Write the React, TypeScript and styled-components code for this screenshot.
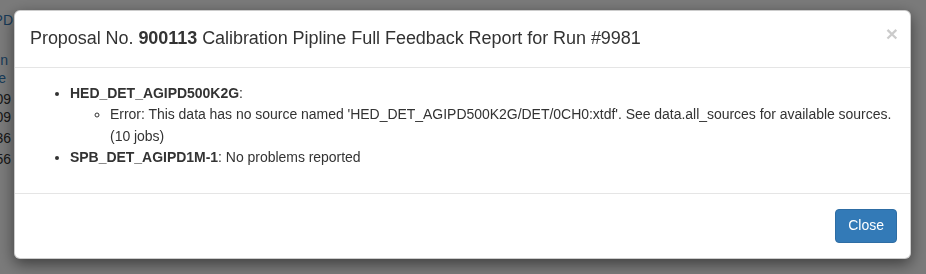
import styled, { createGlobalStyle } from 'styled-components'

const GlobalStyle = createGlobalStyle`
  html, body {
    margin: 0;
    padding: 0;
    background: #fff;
    font-family: "Liberation Sans", Arial, Helvetica, sans-serif;
    color: #333;
    font-size: 14px;
    line-height: 1.42857;
  }
  * { box-sizing: border-box; }
`

const Page = styled.div`
  width: 926px;
  height: 274px;
  overflow: hidden;
`

const PageColumn = styled.div`
  width: 14px;
  overflow: hidden;
  direction: rtl;
  text-align: right;
  white-space: nowrap;
  padding-top: 10px;
`

const PageCell = styled.div<{ $link?: boolean; $gap: number; $trim: number }>`
  margin-top: ${(p) => p.$gap}px;
  padding-right: ${(p) => p.$trim}px;
  height: 20px;
  line-height: 20px;
  color: ${(p) => (p.$link ? '#337ab7' : '#333')};
`

const Backdrop = styled.div`
  position: fixed;
  inset: 0;
  background: rgba(0, 0, 0, 0.52);
`

const Dialog = styled.div`
  position: fixed;
  top: 10px;
  left: 14px;
  width: 897px;
  background: #fff;
  border: 1px solid rgba(0, 0, 0, 0.2);
  border-radius: 6px;
  box-shadow: 0 5px 15px rgba(0, 0, 0, 0.5);
`

const Header = styled.div`
  display: flex;
  align-items: flex-start;
  justify-content: space-between;
  padding: 15px;
  border-bottom: 1px solid #e5e5e5;
`

const Title = styled.h4`
  margin: 0;
  font-size: 18px;
  font-weight: 500;
  line-height: 1.42857;
  letter-spacing: -0.05px;
`

const CloseX = styled.button`
  border: 0;
  background: transparent;
  padding: 0;
  margin-top: -3px;
  margin-right: -3px;
  font-family: "Liberation Sans", Arial, sans-serif;
  font-size: 21px;
  font-weight: 700;
  line-height: 1;
  color: #000;
  opacity: 0.2;
  text-shadow: 0 1px 0 #fff;
`

const Body = styled.div`
  padding: 15px;
  font-size: 14px;
  line-height: 21.4px;
  letter-spacing: -0.03px;
`

const List = styled.ul<{ $nested?: boolean }>`
  margin: 0 0 ${(p) => (p.$nested ? 0 : 10)}px;
  padding-left: 40px;
  list-style-type: ${(p) => (p.$nested ? 'circle' : 'disc')};
`

const Footer = styled.div`
  display: flex;
  justify-content: flex-end;
  padding: 15px;
  border-top: 1px solid #e5e5e5;
`

const Button = styled.button`
  font-family: "Liberation Sans", Arial, sans-serif;
  font-size: 14px;
  line-height: 1.42857;
  padding: 6px 12px;
  color: #fff;
  background: #337ab7;
  border: 1px solid #2e6da4;
  border-radius: 4px;
  margin-right: -2px;
`

const pageCells = [
  { text: 'AGIPD', link: true, gap: 0, trim: 1 },
  { text: 'Run', link: true, gap: 20, trim: 6 },
  { text: 'Feedbackle', link: true, gap: -2, trim: 8 },
  { text: '2023-09', gap: 1, trim: 3 },
  { text: '2023-09', gap: -2, trim: 3 },
  { text: '12:36', gap: 1, trim: 3 },
  { text: '12:56', gap: 1, trim: 3 },
]

export default function App() {
  return (
    <Page>
      <GlobalStyle />
      <PageColumn>
        {pageCells.map((c, i) => (
          <PageCell key={i} $link={c.link} $gap={c.gap} $trim={c.trim}>
            {c.text}
          </PageCell>
        ))}
      </PageColumn>
      <Backdrop />
      <Dialog>
        <Header>
          <Title>
            Proposal No. <b>900113</b> Calibration Pipline Full Feedback Report for Run #9981
          </Title>
          <CloseX>×</CloseX>
        </Header>
        <Body>
          <List>
            <li>
              <b>HED_DET_AGIPD500K2G</b>:
              <List $nested>
                <li>
                  Error: This data has no source named 'HED_DET_AGIPD500K2G/DET/0CH0:xtdf'. See
                  data.all_sources for available sources. (10 jobs)
                </li>
              </List>
            </li>
            <li>
              <b>SPB_DET_AGIPD1M-1</b>: No problems reported
            </li>
          </List>
        </Body>
        <Footer>
          <Button>Close</Button>
        </Footer>
      </Dialog>
    </Page>
  )
}
